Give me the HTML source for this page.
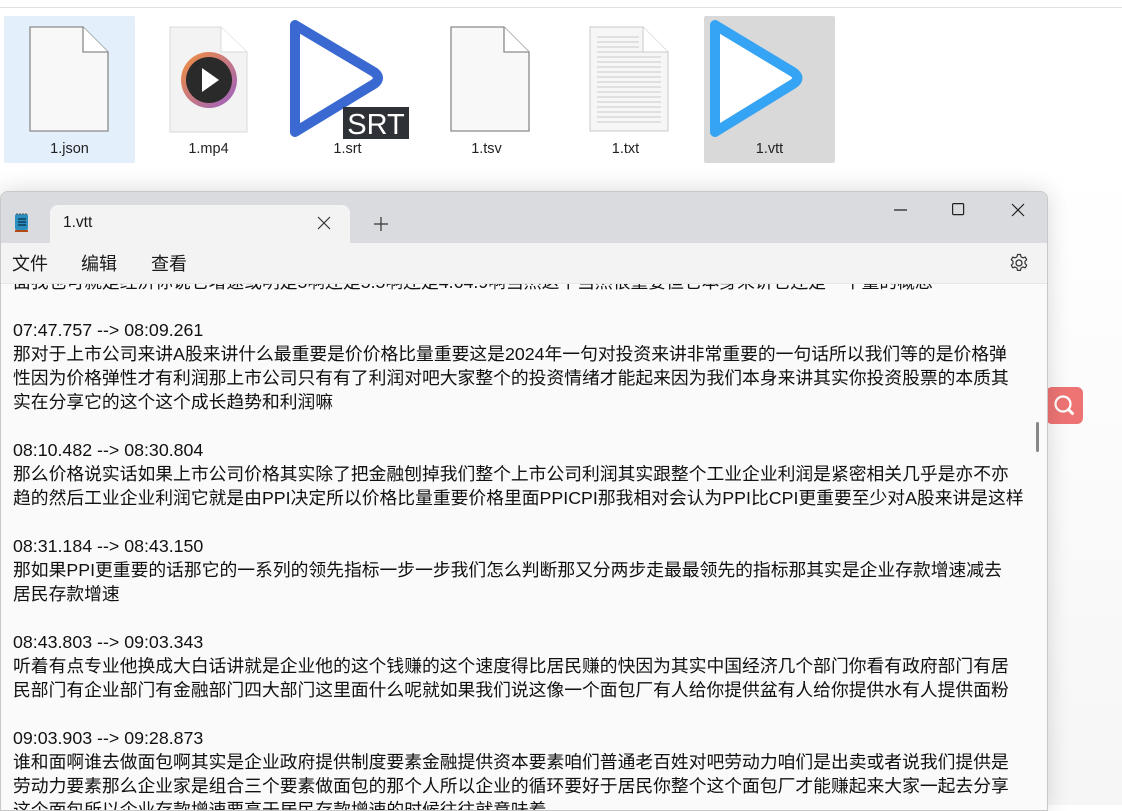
<!DOCTYPE html>
<html><head><meta charset="utf-8"><style>
*{margin:0;padding:0;box-sizing:border-box}
body{width:1122px;height:805px;overflow:hidden;position:relative;background:#fff;font-family:"Liberation Sans","Noto Sans CJK SC",sans-serif;color:#1a1a1a}
.topline{position:absolute;left:0;right:0;top:7px;height:1px;background:#e0e0e0}
.desk{position:absolute;left:0;right:0;top:165px;bottom:0;background:linear-gradient(#fff,#f6f6f6)}
.item{position:absolute;top:16px;width:131px;height:147px;border-radius:2px}
.lbl{position:absolute;left:0;right:0;top:124px;text-align:center;font-size:14.5px;color:#222;line-height:18px}
.win{position:absolute;left:0;top:191px;width:1048px;height:620px;background:#fafafa;border:1px solid #c8c8c8;border-radius:8px 8px 0 0;overflow:hidden;box-shadow:0 0 24px rgba(0,0,0,.15)}
.title{position:absolute;left:0;top:0;right:0;height:51px;background:#dadbde}
.tab{position:absolute;left:49px;top:13px;width:300px;height:38px;background:#f3f3f3;border-radius:8px 8px 0 0}
.menu{position:absolute;left:0;right:0;top:51px;height:41px;background:#f3f3f3;border-bottom:1px solid #e6e6e6;font-size:18px}
.menu span{position:absolute;top:7px}
.text{position:absolute;left:0;right:0;top:92px;bottom:0;overflow:hidden;background:#fafafa}
.lines{position:absolute;left:12px;top:-14px;font-size:17.8px;line-height:24px;white-space:nowrap;color:#111}
</style></head><body>
<div class="topline"></div>
<div class="desk"></div>

<div class="item" style="left:4px;background:#e3f0fb">
 <svg width="131" height="125" style="position:absolute;left:0;top:0"><path d="M26 11h53l25 25v79H26z" fill="#f8f8f8" stroke="#8a8a8a" stroke-width="1.3"/><path d="M79 11v25h25" fill="#fff" stroke="#8a8a8a" stroke-width="1.3"/></svg>
 <div class="lbl">1.json</div></div>
<div class="item" style="left:143px">
 <svg width="131" height="125" style="position:absolute;left:0;top:0"><path d="M27 11h51l26 25v80H27z" fill="#f3f3f3" stroke="#d8d8d8"/><path d="M78 11v25h26" fill="#fff" stroke="#d8d8d8"/>
 <defs><linearGradient id="g" x1="0" y1="0" x2="1" y2="1"><stop offset="0" stop-color="#f4913a"/><stop offset="1" stop-color="#9a5fc7"/></linearGradient></defs>
 <circle cx="66" cy="64" r="28" fill="url(#g)"/><circle cx="66" cy="64" r="23" fill="#2a2a2a"/><path d="M59 52l17 12-17 12z" fill="#fff"/></svg>
 <div class="lbl">1.mp4</div></div>
<div class="item" style="left:282px">
 <svg width="131" height="125" style="position:absolute;left:0;top:0"><path d="M13 9 L92 56 Q100 62 92 68 L13 116 Z" fill="#fff" stroke="#3a6ad1" stroke-width="10" stroke-linejoin="round"/>
 <rect x="61" y="91" width="66" height="32" fill="#2e3236"/><text x="94" y="118" text-anchor="middle" font-size="29" fill="#fff" font-family="Liberation Sans">SRT</text></svg>
 <div class="lbl">1.srt</div></div>
<div class="item" style="left:421px">
 <svg width="131" height="125" style="position:absolute;left:0;top:0"><path d="M30 11h53l25 25v79H30z" fill="#f8f8f8" stroke="#8a8a8a" stroke-width="1.3"/><path d="M83 11v25h25" fill="#fff" stroke="#8a8a8a" stroke-width="1.3"/></svg>
 <div class="lbl">1.tsv</div></div>
<div class="item" style="left:560px">
 <svg width="131" height="125" style="position:absolute;left:0;top:0"><path d="M30 11h53l25 25v79H30z" fill="#f6f6f6" stroke="#c8c8c8"/><path d="M83 11v25h25" fill="#fff" stroke="#c8c8c8"/>
 <g stroke="#c9c9c9" stroke-width="1"><path d="M37 21h42M37 26h42M37 31h42M37 36h64M37 41h64M37 46h64M37 51h64M37 56h64M37 61h64M37 66h64M37 71h64M37 76h64M37 81h64M37 86h64M37 91h64M37 96h64M37 101h64M37 106h64"/></g></svg>
 <div class="lbl">1.txt</div></div>
<div class="item" style="left:704px;background:#d9d9d9">
 <svg width="131" height="125" style="position:absolute;left:0;top:0"><path d="M11 9 L89 56 Q98 62 89 68 L11 116 Z" fill="#fff" stroke="#36a4f4" stroke-width="10" stroke-linejoin="round"/></svg>
 <div class="lbl">1.vtt</div></div>

<div style="position:absolute;left:1046px;top:387px;width:37px;height:37px;background:#ee7474;border-radius:6px"><svg width="37" height="37"><circle cx="17" cy="17" r="7.5" fill="none" stroke="#fff" stroke-width="2.2"/><path d="M22.5 22.5l4 4" stroke="#fff" stroke-width="3" stroke-linecap="round"/></svg></div>

<div class="win">
 <div class="title">
  <svg width="20" height="22" style="position:absolute;left:12px;top:20px"><rect x="2" y="2" width="13" height="16" rx="2" fill="#2a8fbf"/><path d="M5 7h8M5 10h8M5 13h8" stroke="#0d3d5a" stroke-width="1.5"/><path d="M2 19h13" stroke="#b34a16" stroke-width="2"/><path d="M4 1v2M7 1v2M10 1v2M13 1v2" stroke="#555" stroke-width="1"/></svg>
  <div class="tab"><span style="position:absolute;left:13px;top:9px;font-size:15.5px">1.vtt</span>
   <svg width="14" height="14" style="position:absolute;left:267px;top:11px"><path d="M1 1l12 12M13 1L1 13" stroke="#333" stroke-width="1.2"/></svg></div>
  <svg width="14" height="14" style="position:absolute;left:373px;top:25px"><path d="M7 0v14M0 7h14" stroke="#333" stroke-width="1.2"/></svg>
  <svg width="14" height="2" style="position:absolute;left:1070px;top:17px"></svg>
  <svg width="14" height="2" style="position:absolute;left:893px;top:17px"><path d="M0 1h13" stroke="#222" stroke-width="1.2"/></svg>
  <svg width="13" height="13" style="position:absolute;left:951px;top:11px"><rect x="0.6" y="0.6" width="11" height="11" rx="1" fill="none" stroke="#222" stroke-width="1.2"/></svg>
  <svg width="14" height="14" style="position:absolute;left:1010px;top:11px"><path d="M1 1l12 12M13 1L1 13" stroke="#222" stroke-width="1.2"/></svg>
 </div>
 <div class="menu"><span style="left:11px">文件</span><span style="left:80px">编辑</span><span style="left:150px">查看</span>
  <svg width="20" height="20" style="position:absolute;left:1008px;top:10px"><circle cx="10" cy="10" r="3" fill="none" stroke="#333" stroke-width="1.3"/><path d="M8.5 1.5h3l.5 2.3 2 1.1 2.2-.8 1.5 2.6-1.7 1.6v2.3l1.7 1.6-1.5 2.6-2.2-.8-2 1.1-.5 2.3h-3l-.5-2.3-2-1.1-2.2.8-1.5-2.6 1.7-1.6V8.3L2.3 6.7l1.5-2.6 2.2.8 2-1.1z" fill="none" stroke="#333" stroke-width="1.2" stroke-linejoin="round"/></svg></div>
 <div class="text">
  <div class="lines">
   面我也可就是经济你说它增速或明是5啊还是5.5啊还是4.64.9啊当然这个当然很重要但它本身来讲它还是一个量的概念<br><br>
   07:47.757 --&gt; 08:09.261<br>
   那对于上市公司来讲A股来讲什么最重要是价价格比量重要这是2024年一句对投资来讲非常重要的一句话所以我们等的是价格弹<br>
   性因为价格弹性才有利润那上市公司只有有了利润对吧大家整个的投资情绪才能起来因为我们本身来讲其实你投资股票的本质其<br>
   实在分享它的这个这个成长趋势和利润嘛<br><br>
   08:10.482 --&gt; 08:30.804<br>
   那么价格说实话如果上市公司价格其实除了把金融刨掉我们整个上市公司利润其实跟整个工业企业利润是紧密相关几乎是亦不亦<br>
   趋的然后工业企业利润它就是由PPI决定所以价格比量重要价格里面PPICPI那我相对会认为PPI比CPI更重要至少对A股来讲是这样<br><br>
   08:31.184 --&gt; 08:43.150<br>
   那如果PPI更重要的话那它的一系列的领先指标一步一步我们怎么判断那又分两步走最最领先的指标那其实是企业存款增速减去<br>
   居民存款增速<br><br>
   08:43.803 --&gt; 09:03.343<br>
   听着有点专业他换成大白话讲就是企业他的这个钱赚的这个速度得比居民赚的快因为其实中国经济几个部门你看有政府部门有居<br>
   民部门有企业部门有金融部门四大部门这里面什么呢就如果我们说这像一个面包厂有人给你提供盆有人给你提供水有人提供面粉<br><br>
   09:03.903 --&gt; 09:28.873<br>
   谁和面啊谁去做面包啊其实是企业政府提供制度要素金融提供资本要素咱们普通老百姓对吧劳动力咱们是出卖或者说我们提供是<br>
   劳动力要素那么企业家是组合三个要素做面包的那个人所以企业的循环要好于居民你整个这个面包厂才能赚起来大家一起去分享<br>
   这个面包所以企业存款增速要高于居民存款增速的时候往往就意味着
  </div>
  <div style="position:absolute;left:1035px;top:138px;width:3px;height:30px;background:#888;border-radius:2px"></div>
 </div>
</div>
</body></html>
